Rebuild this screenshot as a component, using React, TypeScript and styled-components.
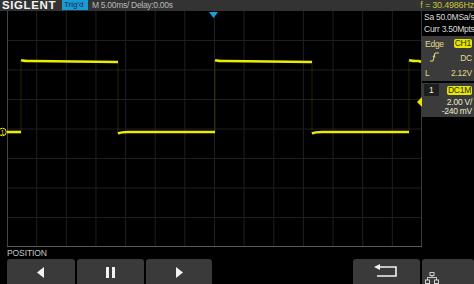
import styled, {createGlobalStyle} from "styled-components";

const GlobalStyle = createGlobalStyle`
  html, body {
    margin: 0;
    padding: 0;
    background: #000;
  }
  body {
    font-family: "Liberation Sans", Arial, sans-serif;
  }
`;

const Screen = styled.div`
  width: 474px;
  height: 284px;
  background: #000;
  display: flex;
  flex-direction: column;
  overflow: hidden;
  color: #ddd;
`;

const Header = styled.div`
  height: 11px;
  background: #333;
  display: flex;
  align-items: center;
  font-size: 8.5px;
  line-height: 11px;
  white-space: nowrap;
`;

const Logo = styled.div`
  font-weight: 900;
  font-size: 11.5px;
  letter-spacing: 0.6px;
  color: #f4f4f4;
  padding-left: 2px;
  width: 58px;
  height: 11px;
  line-height: 11px;
`;

const TrigBadge = styled.div`
  background: #1c9ad6;
  color: #0b2c48;
  height: 10px;
  line-height: 10px;
  width: 22px;
  padding: 0 2px;
  margin-left: 2px;
  align-self: flex-start;
  font-size: 8px;
`;

const Timebase = styled.div`
  color: #b8b8b8;
  margin-left: 4px;
  letter-spacing: -0.3px;
`;

const Frequency = styled.div`
  margin-left: auto;
  color: #c6c63a;
  font-size: 9px;
  letter-spacing: -0.2px;
`;

const Body = styled.div`
  display: flex;
  height: 237px;
`;

const Plot = styled.svg`
  display: block;
  width: 422px;
  height: 237px;
  flex: none;
`;

const Side = styled.div`
  width: 52px;
  display: flex;
  flex-direction: column;
  font-size: 8.5px;
  letter-spacing: -0.25px;
  white-space: nowrap;
`;

const InfoLine = styled.div`
  height: 12px;
  line-height: 12px;
  padding-left: 2px;
  color: #dcdcdc;
`;

const Panel = styled.div<{ $mt: number }>`
  margin-top: ${p => p.$mt}px;
  background: #3b3b3b;
  display: flex;
  flex-direction: column;
  padding: 1px 0 1px 0;
`;

const PanelRow = styled.div<{ $h: number; $color?: string }>`
  height: ${p => p.$h}px;
  display: flex;
  align-items: center;
  justify-content: space-between;
  padding: 0 2px 0 3px;
  color: ${p => p.$color ?? "#e0da86"};
`;

const RightText = styled.div<{ $color?: string }>`
  text-align: right;
  padding-right: 2px;
  color: ${p => p.$color ?? "#ececcf"};
  line-height: 9px;
`;

const Badge = styled.span`
  background: #e6e600;
  color: #2a2a2a;
  border-radius: 2px;
  padding: 0 1px;
  height: 9px;
  line-height: 9px;
  font-size: 8.5px;
`;

const ChannelNum = styled.span`
  background: #1e1e1e;
  color: #eee;
  width: 15px;
  height: 12px;
  line-height: 12px;
  padding-left: 5px;
  box-sizing: border-box;
  margin-left: -1px;
`;

const Footer = styled.div`
  display: flex;
  flex-direction: column;
  padding-left: 7px;
`;

const Label = styled.div`
  font-size: 8.5px;
  color: #c8c8c8;
  height: 11px;
  line-height: 11px;
  letter-spacing: -0.1px;
`;

const Buttons = styled.div`
  display: flex;
  gap: 2px;
`;

const SoftKey = styled.div<{ $w: number; $ml?: number }>`
  width: ${p => p.$w}px;
  margin-left: ${p => p.$ml ?? 0}px;
  height: 26px;
  background: #3a3a3a;
  border-radius: 3px 3px 0 0;
  display: flex;
  align-items: center;
  justify-content: center;
  color: #f2f2f2;
`;

const NetKey = styled(SoftKey)`
  justify-content: flex-start;
  align-items: flex-end;
  padding: 0 0 1px 3px;
  box-sizing: border-box;
`;

const GX0 = 7;
const GX1 = 422;
const GY0 = 0;
const GY1 = 236;

const Graticule = () => {
  const cols = Array.from({length: 15}, (_, i) => GX0 + (GX1 - GX0) * i / 14);
  const rows = Array.from({length: 9}, (_, j) => GY0 + (GY1 - GY0) * j / 8);
  return (
    <g>
      {cols.slice(1, -1).map(x => (
        <line key={"v" + x} x1={x} y1={GY0} x2={x} y2={GY1} stroke="#1f1f1f" strokeWidth={1}/>
      ))}
      {rows.slice(1, -1).map(y => (
        <line key={"h" + y} x1={GX0} y1={y} x2={GX1} y2={y} stroke="#1e1e1e" strokeWidth={1}/>
      ))}
      <line x1={GX0 + 0.5} y1={0} x2={GX0 + 0.5} y2={GY1} stroke="#444"/>
      <line x1={GX1 - 0.5} y1={0} x2={GX1 - 0.5} y2={GY1} stroke="#3a3a3a"/>
      <line x1={GX0} y1={GY1 - 0.5} x2={GX1} y2={GY1 - 0.5} stroke="#5a5a5a"/>
    </g>
  );
};

// header is 11px tall, so plot y = screen y - 11
const HI = 50;
const LO = 121;
const edges = [21, 118, 215, 312, 409];

const Waveform = () => {
  const yellow = "#ecec00";
  const segs: { x0: number; x1: number; high: boolean }[] = [
    {x0: GX0, x1: edges[0], high: false},
    {x0: edges[0], x1: edges[1], high: true},
    {x0: edges[1], x1: edges[2], high: false},
    {x0: edges[2], x1: edges[3], high: true},
    {x0: edges[3], x1: edges[4], high: false},
    {x0: edges[4], x1: GX1 - 1, high: true},
  ];
  return (
    <g>
      {edges.map(x => (
        <line key={x} x1={x} y1={HI} x2={x} y2={LO} stroke={yellow} strokeOpacity={0.15} strokeWidth={1}/>
      ))}
      {segs.map(s => {
        const y = s.high ? HI : LO;
        const start = s.x0 === GX0 ? y : (s.high ? y - 0.8 : y + 1.5);
        return (
          <path
            key={s.x0}
            d={`M${s.x0} ${start} Q${s.x0 + 3} ${y} ${s.x0 + 10} ${y} L${s.x1} ${s.high ? y + 1 : y}`}
            fill="none"
            stroke={yellow}
            strokeWidth={2.6}
          />
        );
      })}
    </g>
  );
};

const Markers = () => (
  <g>
    {/* trigger position */}
    <polygon points="209,1 218,1 213.5,7" fill="#19a0dc"/>
    {/* trigger level */}
    <polygon points="417,91 422,86 422,96" fill="#e6e600"/>
    {/* ch1 ground */}
    <circle cx={2.5} cy={LO} r={3.8} fill="#000" stroke="#e6e600" strokeWidth={1}/>
    <text x={2.5} y={LO + 2.6} fontSize={6.5} fill="#e6e600" textAnchor="middle" fontFamily="Liberation Sans, sans-serif">1</text>
  </g>
);

const SlopeIcon = () => (
  <svg width="10" height="10" viewBox="0 0 10 10">
    <path d="M0 9 H3 L5 1 H9" fill="none" stroke="#e0da86" strokeWidth={1}/>
    <path d="M2.8 5 L4.2 3.4 L4.9 5.4" fill="none" stroke="#e0da86" strokeWidth={1}/>
  </svg>
);

const LeftIcon = () => (
  <svg width="8" height="11" viewBox="0 0 8 11"><polygon points="7,0 7,11 0,5.5" fill="#f2f2f2"/></svg>
);
const RightIcon = () => (
  <svg width="8" height="11" viewBox="0 0 8 11"><polygon points="1,0 1,11 8,5.5" fill="#f2f2f2"/></svg>
);
const PauseIcon = () => (
  <svg width="9" height="11" viewBox="0 0 9 11">
    <rect x="0" y="0" width="3" height="11" fill="#f2f2f2"/>
    <rect x="6" y="0" width="3" height="11" fill="#f2f2f2"/>
  </svg>
);
const ReturnIcon = () => (
  <svg width="26" height="14" viewBox="0 0 26 14" style={{marginTop: -2}}>
    <path d="M5 3 H22 V12 H3" fill="none" stroke="#f2f2f2" strokeWidth={1.6}/>
    <polygon points="0,3 6,0 6,6" fill="#f2f2f2"/>
  </svg>
);
const NetIcon = () => (
  <svg width="14" height="12" viewBox="0 0 14 12">
    <g fill="none" stroke="#cfcfcf" strokeWidth={1}>
      <rect x="5" y="0.5" width="4" height="3"/>
      <path d="M7 3.5 V5.5 M2.5 5.5 H11.5 M2.5 5.5 V8 M11.5 5.5 V8"/>
      <rect x="0.5" y="8" width="4" height="3.5"/>
      <rect x="9.5" y="8" width="4" height="3.5"/>
    </g>
  </svg>
);

export default function App() {
  return (
    <>
      <GlobalStyle/>
      <Screen>
        <Header>
          <Logo>SIGLENT</Logo>
          <TrigBadge>Trig'd</TrigBadge>
          <Timebase>M 5.00ms/ Delay:0.00s</Timebase>
          <Frequency>f = 30.4986Hz</Frequency>
        </Header>
        <Body>
          <Plot viewBox="0 0 422 237">
            <Graticule/>
            <Waveform/>
            <Markers/>
          </Plot>
          <Side>
            <InfoLine>Sa 50.0MSa/s</InfoLine>
            <InfoLine>Curr 3.50Mpts</InfoLine>
            <Panel $mt={1}>
              <PanelRow $h={13}>
                <span>Edge</span>
                <Badge>CH1</Badge>
              </PanelRow>
              <PanelRow $h={16}>
                <span style={{paddingLeft: 5}}><SlopeIcon/></span>
                <span>DC</span>
              </PanelRow>
              <PanelRow $h={14}>
                <span>L</span>
                <span>2.12V</span>
              </PanelRow>
            </Panel>
            <Panel $mt={2}>
              <PanelRow $h={12} $color="#eee">
                <ChannelNum>1</ChannelNum>
                <Badge>DC1M</Badge>
              </PanelRow>
              <RightText style={{marginTop: 2}}>2.00 V/</RightText>
              <RightText>-240 mV</RightText>
            </Panel>
          </Side>
        </Body>
        <Footer>
          <Label>POSITION</Label>
          <Buttons>
            <SoftKey $w={68}><LeftIcon/></SoftKey>
            <SoftKey $w={67}><PauseIcon/></SoftKey>
            <SoftKey $w={67}><RightIcon/></SoftKey>
            <SoftKey $w={67} $ml={139}><ReturnIcon/></SoftKey>
            <NetKey $w={52}><NetIcon/></NetKey>
          </Buttons>
        </Footer>
      </Screen>
    </>
  );
}
